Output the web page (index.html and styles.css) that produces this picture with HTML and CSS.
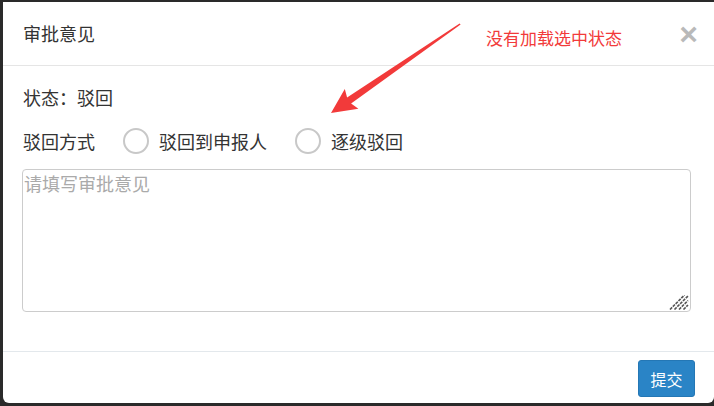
FILE: index.html
```html
<!DOCTYPE html>
<html lang="zh-CN">
<head>
    <meta charset="UTF-8">
    <meta name="viewport" content="width=device-width, initial-scale=1.0">
    <title>审批意见</title>
    <link rel="stylesheet" href="styles.css">
</head>
<body>
    <div class="modal">
        <div class="modal-header">
            <h4 class="modal-title">审批意见</h4>
            <span class="close">&times;</span>
        </div>
        <div class="modal-body">
            <div class="status">状态：驳回</div>
            <div class="reject-row">
                <span class="reject-label">驳回方式</span>
                <label class="radio"><input type="radio" name="rejectType" value="1"><span>驳回到申报人</span></label>
                <label class="radio"><input type="radio" name="rejectType" value="2"><span>逐级驳回</span></label>
            </div>
            <div class="opinion-wrap">
                <textarea class="opinion" placeholder="请填写审批意见"></textarea>
                <svg class="grip" width="20" height="15" viewBox="0 0 20 15">
                    <g stroke="#555" stroke-width="1.6" stroke-dasharray="3 1">
                        <line x1="1" y1="14.5" x2="15.5" y2="0"/>
                        <line x1="5.5" y1="14.5" x2="19" y2="1"/>
                        <line x1="10" y1="14.5" x2="19" y2="5.5"/>
                        <line x1="14.5" y1="14.5" x2="19" y2="10"/>
                    </g>
                </svg>
            </div>
        </div>
        <div class="modal-footer">
            <button class="btn-submit">提交</button>
        </div>
    </div>

    <!-- annotation -->
    <div class="note">没有加载选中状态</div>
    <svg class="note-arrow" width="714" height="406" viewBox="0 0 714 406">
        <polygon points="460.6,24.4 351.1,103.4 358.4,108.7 331,113 344.8,88.9 347.1,97.6 459.6,23.6" fill="#f23a3a"/>
    </svg>
</body>
</html>
```

FILE: styles.css
```css
body {
    margin: 0;
    padding: 2px 0 0 3px;
    background-color: #2a2a2a;
    font-family: "Noto Sans CJK SC", "Microsoft YaHei", sans-serif;
    color: #333;
    overflow: hidden;
    height: 406px;
    box-sizing: border-box;
}

.modal {
    width: 711px;
    height: 401px;
    background-color: #fff;
    border-radius: 0 0 6px 6px;
    display: flex;
    flex-direction: column;
}

.modal-header {
    height: 63px;
    border-bottom: 1px solid #e5e5e5;
    display: flex;
    align-items: center;
    justify-content: space-between;
    padding: 0 16px 0 20px;
}

.modal-title {
    margin: 0;
    font-size: 18px;
    font-weight: normal;
    line-height: 24px;
    margin-top: -1px;
}

.close {
    font-family: "Liberation Sans", Arial, sans-serif;
    font-size: 32px;
    font-weight: bold;
    line-height: 1;
    color: #000;
    opacity: 0.27;
    margin-top: 1px;
    cursor: pointer;
}

.modal-body {
    flex: 1;
    padding: 19px 23px 0 20px;
    font-size: 18px;
}

.status {
    line-height: 24px;
}

.reject-row {
    display: flex;
    align-items: center;
    height: 28px;
    margin-top: 18px;
    line-height: 24px;
}

.reject-label {
    margin-right: 28px;
}

.radio {
    display: flex;
    align-items: center;
    margin-right: 28px;
    cursor: pointer;
}

.radio input {
    appearance: none;
    -webkit-appearance: none;
    width: 26px;
    height: 26px;
    margin: 0 10px 0 0;
    border: 2px solid #c8c8c8;
    border-radius: 50%;
    box-sizing: border-box;
}

.radio input:checked {
    border-color: #2a84c6;
    background: radial-gradient(circle, #2a84c6 5px, transparent 6px);
}

.opinion-wrap {
    position: relative;
    width: 669px;
    margin: 14px 0 0 -1px;
}

.opinion {
    display: block;
    width: 100%;
    height: 143px;
    padding: 1px 0 0 1px;
    box-sizing: border-box;
    border: 1px solid #ccc;
    border-radius: 4px;
    font-family: inherit;
    font-size: 18px;
    line-height: 24px;
    color: #333;
    resize: none;
    outline: none;
}

.opinion::placeholder {
    color: #aaa;
}

.grip {
    position: absolute;
    right: 2px;
    bottom: 2px;
    pointer-events: none;
}

.modal-footer {
    height: 52px;
    border-top: 1px solid #e3e8ec;
    display: flex;
    justify-content: flex-end;
    align-items: flex-start;
    padding: 8px 19px 0 0;
    box-sizing: border-box;
}

.btn-submit {
    width: 57px;
    height: 37px;
    border: 1px solid #2477b5;
    border-radius: 3px;
    background-color: #2a84c6;
    color: #fff;
    font-family: inherit;
    font-size: 16px;
    padding: 0;
    cursor: pointer;
}

.note {
    position: absolute;
    left: 486px;
    top: 26px;
    font-size: 17px;
    line-height: 24px;
    color: #f23a3a;
}

.note-arrow {
    position: absolute;
    left: 0;
    top: 0;
    pointer-events: none;
}
```
